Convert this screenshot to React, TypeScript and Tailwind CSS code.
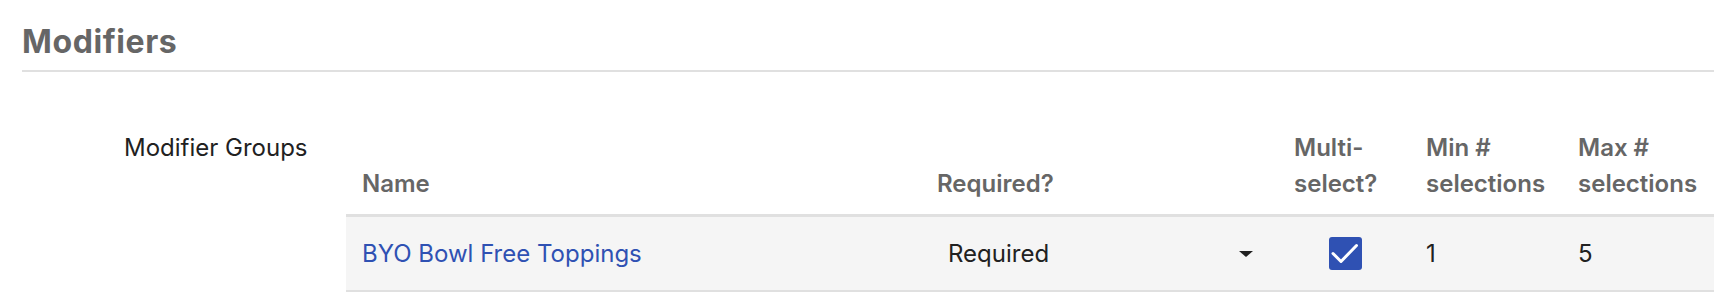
import React from "react";

const font = { fontFamily: "Inter, Roboto, 'Liberation Sans', sans-serif" };

function Checkbox() {
  return (
    <div className="flex h-[33px] w-[33px] items-center justify-center rounded-[3px] bg-[#2f51b3]">
      <svg width="33" height="33" viewBox="0 0 33 33" fill="none">
        <path d="M4 16.5 L12 24.5 L27.5 8.5" stroke="#ffffff" strokeWidth="3" strokeLinecap="round" strokeLinejoin="round" />
      </svg>
    </div>
  );
}

export default function App() {
  return (
    <div className="w-[1732px] h-[302px] bg-white pl-[22px] pr-[18px] pt-[22px]" style={font}>
      <div className="border-b-2 border-[#e0e0e0] pb-[8px]">
        <h2 className="text-[32px] leading-[40px] font-bold tracking-[0.6px] text-[#666666]">Modifiers</h2>
      </div>
      <div className="flex pt-[58px]">
        <div className="ml-[102px] w-[222px] text-[24px] leading-[36px] text-[#212121]">Modifier Groups</div>
        <div className="flex-1">
          <div className="grid grid-cols-[575px_357px_132px_152px_151px] items-end pb-[12px] text-[24px] leading-[36px] font-semibold text-[#666666]">
            <div className="px-4">Name</div>
            <div className="px-4">Required?</div>
            <div className="px-4">Multi-<br />select?</div>
            <div className="px-4">Min #<br />selections</div>
            <div className="px-4">Max #<br />selections</div>
          </div>
          <div className="grid grid-cols-[575px_357px_132px_152px_151px] items-center border-t-[3px] border-b-2 border-[#e0e0e0] bg-[#f5f5f5] h-[78px] text-[24px] leading-[36px] text-[#212121]">
            <div className="px-4 text-[#2f51b3]">BYO Bowl Free Toppings</div>
            <div className="px-4">
              <div className="flex w-[317px] items-center justify-between pl-[11px]">
                <span>Required</span>
                <svg width="16" height="8" viewBox="0 0 16 8">
                  <path d="M1 1 L15 1 L8 7 Z" fill="#212121" />
                </svg>
              </div>
            </div>
            <div className="flex justify-center pl-[3px]">
              <Checkbox />
            </div>
            <div className="px-4">1</div>
            <div className="px-4">5</div>
          </div>
        </div>
      </div>
    </div>
  );
}
